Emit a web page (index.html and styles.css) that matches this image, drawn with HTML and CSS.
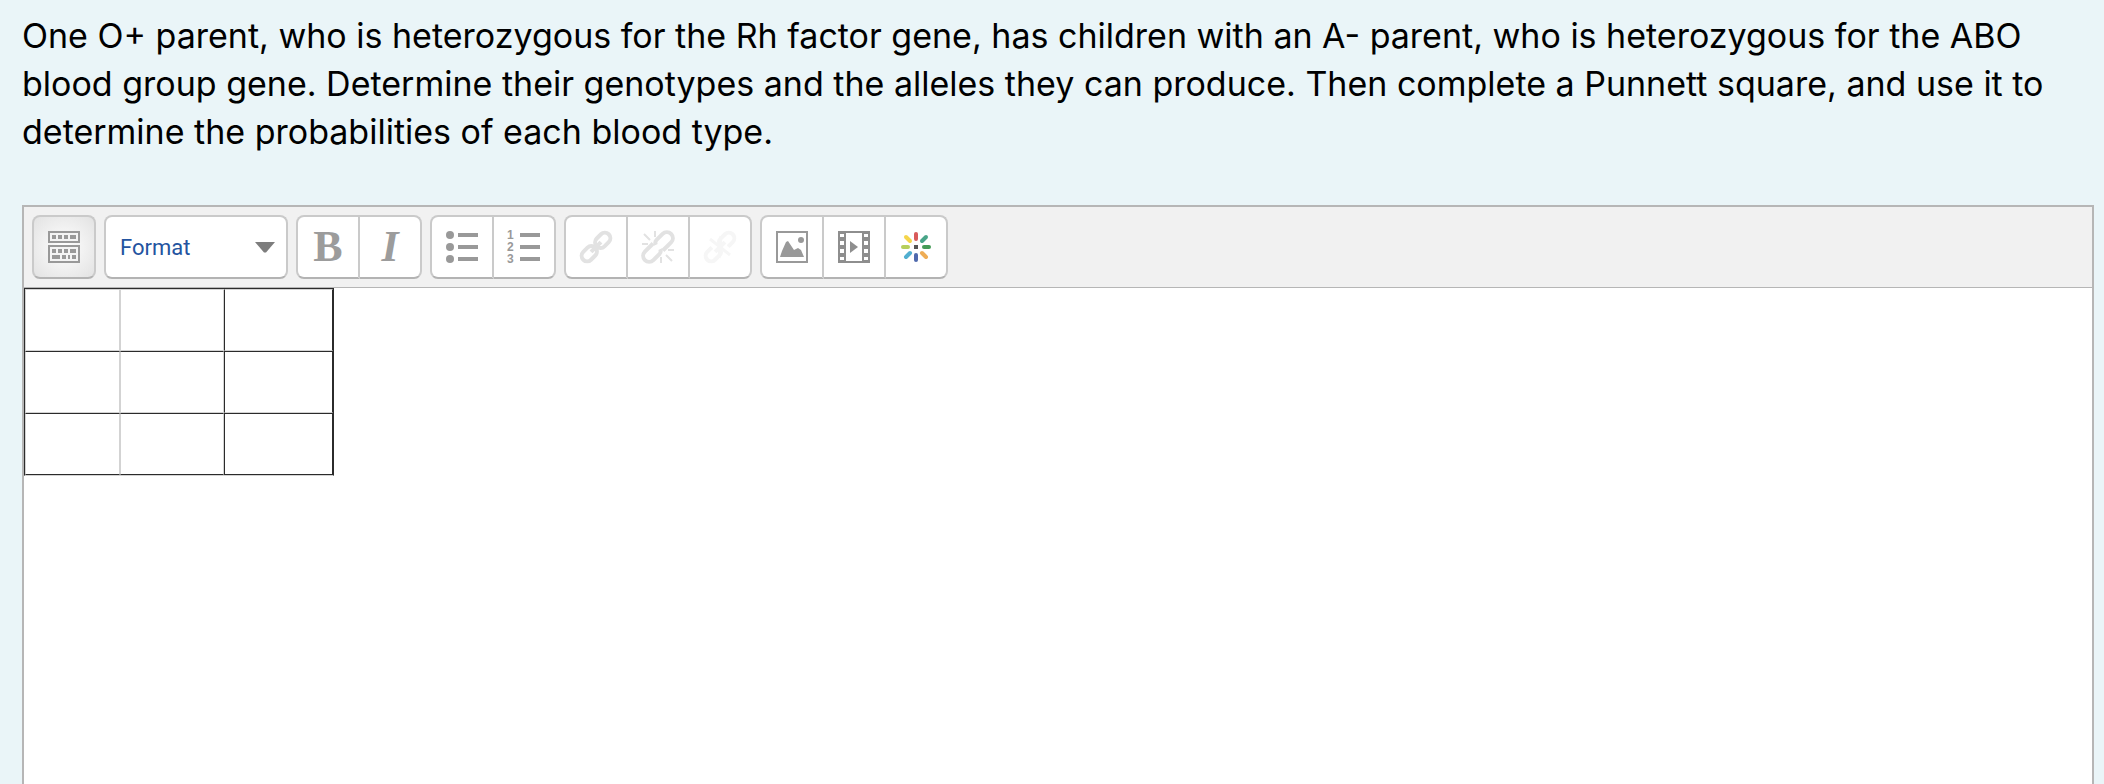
FILE: index.html
```html
<!DOCTYPE html>
<html lang="en">
<head>
<meta charset="utf-8">
<title>Punnett square question</title>
<link rel="stylesheet" href="styles.css">
</head>
<body>
<main class="question">
  <p class="prompt">One O+ parent, who is heterozygous for the Rh factor gene, has children with an A- parent, who is heterozygous for the ABO<br>blood group gene. Determine their genotypes and the alleles they can produce. Then complete a Punnett square, and use it to<br>determine the probabilities of each blood type.</p>
  <section class="editor">
    <div class="toolbar" role="toolbar" aria-label="Editor toolbar">
      <div class="group">
        <button class="tool tool-active" type="button" aria-label="Show more buttons">
          <svg class="icon" viewBox="0 0 32 32" fill="#999">
            <path d="M1 1h30v10H1zM1 15h30v16H1z" fill="#f4f4f4" stroke="#999" stroke-width="2"/>
            <path d="M4 4h4v4H4zM10 4h4v4h-4zM16 4h4v4h-4zM22 4h6v4h-6zM4 18h4v4H4zM10 18h4v4h-4zM16 18h4v4h-4zM22 18h6v4h-6zM4 24h8v4H4zM14 24h4v4h-4zM20 24h2v4h-2zM24 24h4v4h-4z"/>
          </svg>
        </button>
      </div>
      <div class="format">
        <select class="format-select" aria-label="Format"><option>Format</option></select>
        <svg class="arrow" viewBox="0 0 20 11"><path d="M0 0h20L11 10.5H9z" fill="#7d7d7d"/></svg>
      </div>
      <div class="group">
        <button class="tool letter" type="button" aria-label="Bold">B</button>
        <button class="tool letter italic" type="button" aria-label="Italic">I</button>
      </div>
      <div class="group">
        <button class="tool" type="button" aria-label="Bulleted list">
          <svg class="icon" viewBox="0 0 32 32" fill="#999"><circle cx="4" cy="4" r="4"/><circle cx="4" cy="16" r="4"/><circle cx="4" cy="28" r="4"/><path d="M12 2h20v4H12zM12 14h20v4H12zM12 26h20v4H12z"/></svg>
        </button>
        <button class="tool" type="button" aria-label="Numbered list">
          <svg class="icon" viewBox="0 0 32 32" fill="#999"><g class="digits"><text x="-1" y="8">1</text><text x="-1" y="20">2</text><text x="-1" y="32">3</text></g><path d="M12 2h20v4H12zM12 14h20v4H12zM12 26h20v4H12z"/></svg>
        </button>
      </div>
      <div class="group">
        <button class="tool" type="button" aria-label="Link">
          <svg class="icon" viewBox="0 0 32 32" fill="none" stroke="#e2e2e2" stroke-width="4"><g transform="rotate(-45 16 16)"><rect x="-2" y="10.500" width="17" height="11" rx="5.500"/><rect x="17" y="10.500" width="17" height="11" rx="5.500"/><path d="M9 16h14"/></g></svg>
        </button>
        <button class="tool" type="button" aria-label="Unlink">
          <svg class="icon" viewBox="0 0 32 32" fill="none" stroke="#e2e2e2" stroke-width="4"><g transform="rotate(-45 16 16)"><path d="M15 10H3.500a6 6 0 0 0 0 12H12q3 0 4-3M17 22h11.500a6 6 0 0 0 0-12H20q-3 0-4 3"/></g><path d="M2 3l6 6M13 0v6M0 13h6M24 24l6 6M19 26v6M26 19h6" stroke-width="2"/></svg>
        </button>
        <button class="tool" type="button" aria-label="Prevent automatic link">
          <svg class="icon" viewBox="0 0 32 32" fill="none" stroke="#f6f6f6" stroke-width="4"><g transform="rotate(-45 16 16)"><path d="M10 10.500H3.500a5.500 5.500 0 0 0 0 11H10q3 0 4-3M22 21.500h6.500a5.500 5.500 0 0 0 0-11H22q-3 0-4 3M9 16h14"/></g><path d="M6 8l20 16M17 5l-2 22" stroke-width="3"/></svg>
        </button>
      </div>
      <div class="group">
        <button class="tool" type="button" aria-label="Image">
          <svg class="icon" viewBox="0 0 32 32" fill="#999"><path d="M1 1h30v30H1z" fill="#fff" stroke="#999" stroke-width="2"/><circle cx="25" cy="9" r="3"/><path d="M4 26l2-6 4-9 2-1 6 9 4-2 3 2 3 7z"/></svg>
        </button>
        <button class="tool" type="button" aria-label="Media">
          <svg class="icon" viewBox="0 0 32 32"><path d="M0 0h32v32H0z" fill="#8e8e8e"/><path d="M8 2h16v28H8zM2 3h4v3H2zM2 10h4v4H2zM2 18h4v4H2zM2 26h4v3H2zM26 3h4v3h-4zM26 10h4v4h-4zM26 18h4v4h-4zM26 26h4v3h-4z" fill="#fff"/><path d="M12 10l8 6-8 6z" fill="#8e8e8e"/></svg>
        </button>
        <button class="tool" type="button" aria-label="Insert content">
          <svg class="icon" viewBox="0 0 32 32" fill="none" stroke-width="4" stroke-linecap="round"><path d="M16 3v5" stroke="#d95b5b"/><path d="M22 10l4-4" stroke="#48a588"/><path d="M24 16h5" stroke="#459b57"/><path d="M22 22l4 4" stroke="#efad55"/><path d="M16 24v5" stroke="#4f69ad"/><path d="M10 22l-4 4" stroke="#51afd0"/><path d="M3 16h5" stroke="#b6cf5b"/><path d="M10 10L6 6" stroke="#f5d54b"/><path d="M14 14h4v4h-4z" fill="#555"/></svg>
        </button>
      </div>
    </div>
    <div class="document" contenteditable="true" role="textbox" aria-label="Answer">
      <table class="punnett">
        <tbody>
          <tr><td class="side"></td><td class="allele"></td><td class="last"></td></tr>
          <tr><td class="side"></td><td class="allele"></td><td class="last"></td></tr>
          <tr><td class="side"></td><td class="allele"></td><td class="last"></td></tr>
        </tbody>
      </table>
    </div>
  </section>
</main>
</body>
</html>
```

FILE: styles.css
```css
* { box-sizing: border-box; }

body {
  margin: 0;
  background: #eaf5f8;
  font-family: Inter, "Liberation Sans", sans-serif;
  color: #000;
}

.question {
  display: flex;
  flex-direction: column;
  height: 100vh;
  padding: 12px 10px 0 22px;
  overflow: hidden;
}

.prompt {
  margin: 0 0 49px;
  font-size: 34px;
  line-height: 48px;
}

.editor {
  display: flex;
  flex: 1;
  flex-direction: column;
  border: 2px solid #b6b6b6;
  border-bottom: 0;
  background: #fff;
}

.toolbar {
  display: flex;
  flex-wrap: wrap;
  gap: 8px;
  padding: 8px;
  border-bottom: 1px solid #b6b6b6;
  background: #f1f1f1;
}

.group { display: flex; }

.tool {
  display: flex;
  align-items: center;
  justify-content: center;
  width: 62px;
  height: 64px;
  padding: 0;
  border: 2px solid #cacaca;
  border-left-width: 0;
  border-bottom-color: #b3b3b3;
  background: #fff;
}

.tool:first-child {
  width: 64px;
  border-left-width: 2px;
  border-radius: 8px 0 0 8px;
}

.tool:last-child { border-radius: 0 8px 8px 0; }

.tool:only-child {
  border-left-width: 2px;
  border-radius: 8px;
}

.tool-active { background: radial-gradient(#fff, #e2e2e2); }

.icon {
  display: block;
  width: 32px;
  height: 32px;
  overflow: visible;
}

.letter {
  color: #9c9c9c;
  font: bold 44px/60px "Liberation Serif", serif;
}

.italic { font-style: italic; }

.digits { font: bold 12px "Liberation Sans", sans-serif; }

.format {
  position: relative;
  width: 184px;
}

.format-select {
  width: 100%;
  height: 64px;
  padding: 0 40px 0 14px;
  border: 2px solid #cacaca;
  border-bottom-color: #b3b3b3;
  border-radius: 8px;
  appearance: none;
  background: #fff;
  color: #2454a0;
  font: 22px Roboto, sans-serif;
}

.arrow {
  position: absolute;
  top: 27px;
  right: 13px;
  width: 20px;
  height: 11px;
  pointer-events: none;
}

.document {
  flex: 1;
  outline: none;
}

.punnett {
  border: 1px solid #2b2b2b;
  border-bottom-color: #d3d3d3;
  border-spacing: 0;
}

.punnett td {
  height: 62px;
  padding: 0;
  border: 1px solid #d3d3d3;
  border-top-color: #2b2b2b;
}

.punnett tr:first-child td { border-top-color: #d3d3d3; }

.punnett tr:last-child td { border-bottom-color: #2b2b2b; }

.side { width: 95px; }

.allele { width: 104px; }

.last { width: 109px; }

.punnett .last {
  border-right-color: #2b2b2b;
  border-left-color: #2b2b2b;
}
```
